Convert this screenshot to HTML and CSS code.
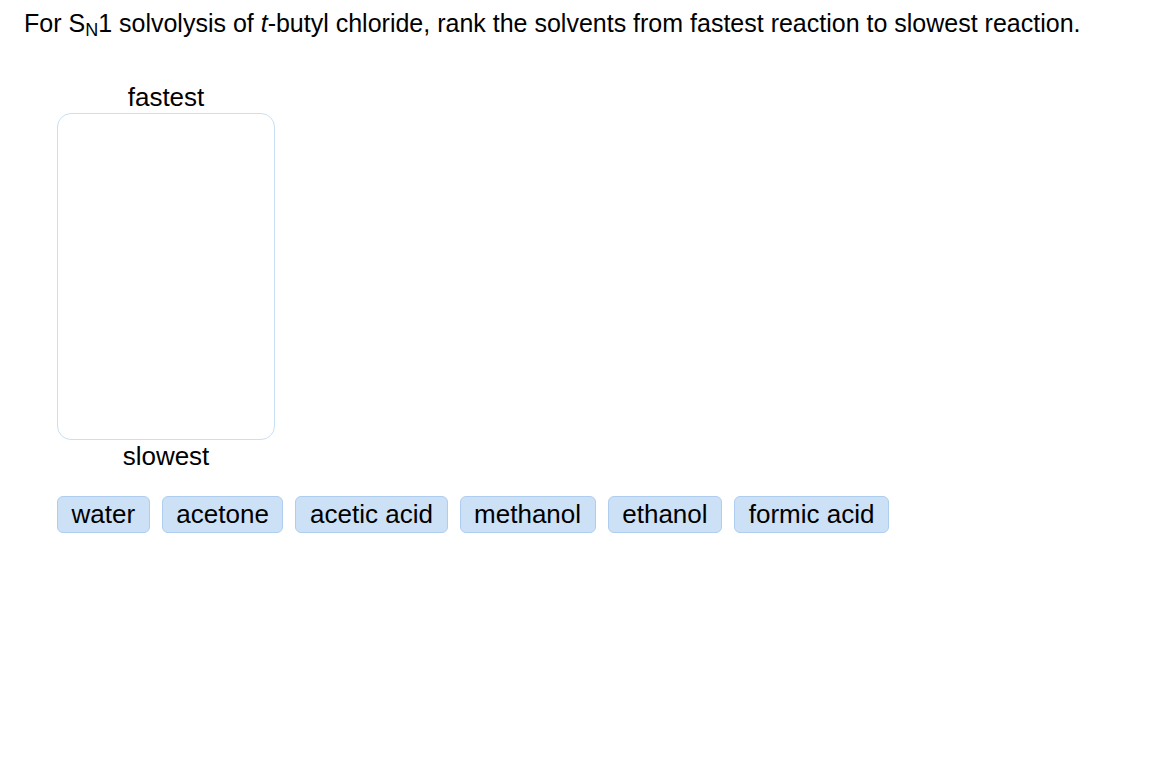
FILE: index.html
```html
<!DOCTYPE html>
<html>
<head>
<meta charset="utf-8">
<link rel="stylesheet" href="styles.css">
</head>
<body>
<div class="page">
  <p class="question">For S<sub>N</sub>1 solvolysis of <i>t</i>-butyl chloride, rank the solvents from fastest reaction to slowest reaction.</p>
  <div class="ranker">
    <div class="label">fastest</div>
    <div class="dropzone"></div>
    <div class="label">slowest</div>
  </div>
  <div class="chips">
    <span class="chip">water</span>
    <span class="chip">acetone</span>
    <span class="chip">acetic acid</span>
    <span class="chip">methanol</span>
    <span class="chip">ethanol</span>
    <span class="chip">formic acid</span>
  </div>
</div>
</body>
</html>
```
FILE: styles.css
```css
html, body {
  margin: 0;
  padding: 0;
  background: #ffffff;
}
body {
  font-family: "Liberation Sans", Arial, sans-serif;
  color: #000;
}
.page {
  padding: 8px 24px 0 24px;
}
.question {
  margin: 0;
  font-size: 25px;
  line-height: 30px;
}
.question sub {
  font-size: 18px;
  vertical-align: -4px;
  line-height: 0;
}
.ranker {
  margin: 44px 0 0 33px;
  width: 218px;
  display: flex;
  flex-direction: column;
  align-items: center;
}
.label {
  font-size: 26px;
  line-height: 30px;
  text-align: center;
}
.dropzone {
  margin: 1px 0 1px 0;
  width: 216px;
  height: 325px;
  border: 1px solid #c9dff2;
  border-radius: 14px;
}
.chips {
  margin: 25px 0 0 33px;
  display: flex;
  gap: 12px;
}
.chip {
  display: inline-block;
  box-sizing: border-box;
  height: 37px;
  padding: 0 13.6px;
  font-size: 26px;
  line-height: 35px;
  background: #cde1f6;
  border: 1px solid #afcdef;
  border-radius: 6px;
}
```
